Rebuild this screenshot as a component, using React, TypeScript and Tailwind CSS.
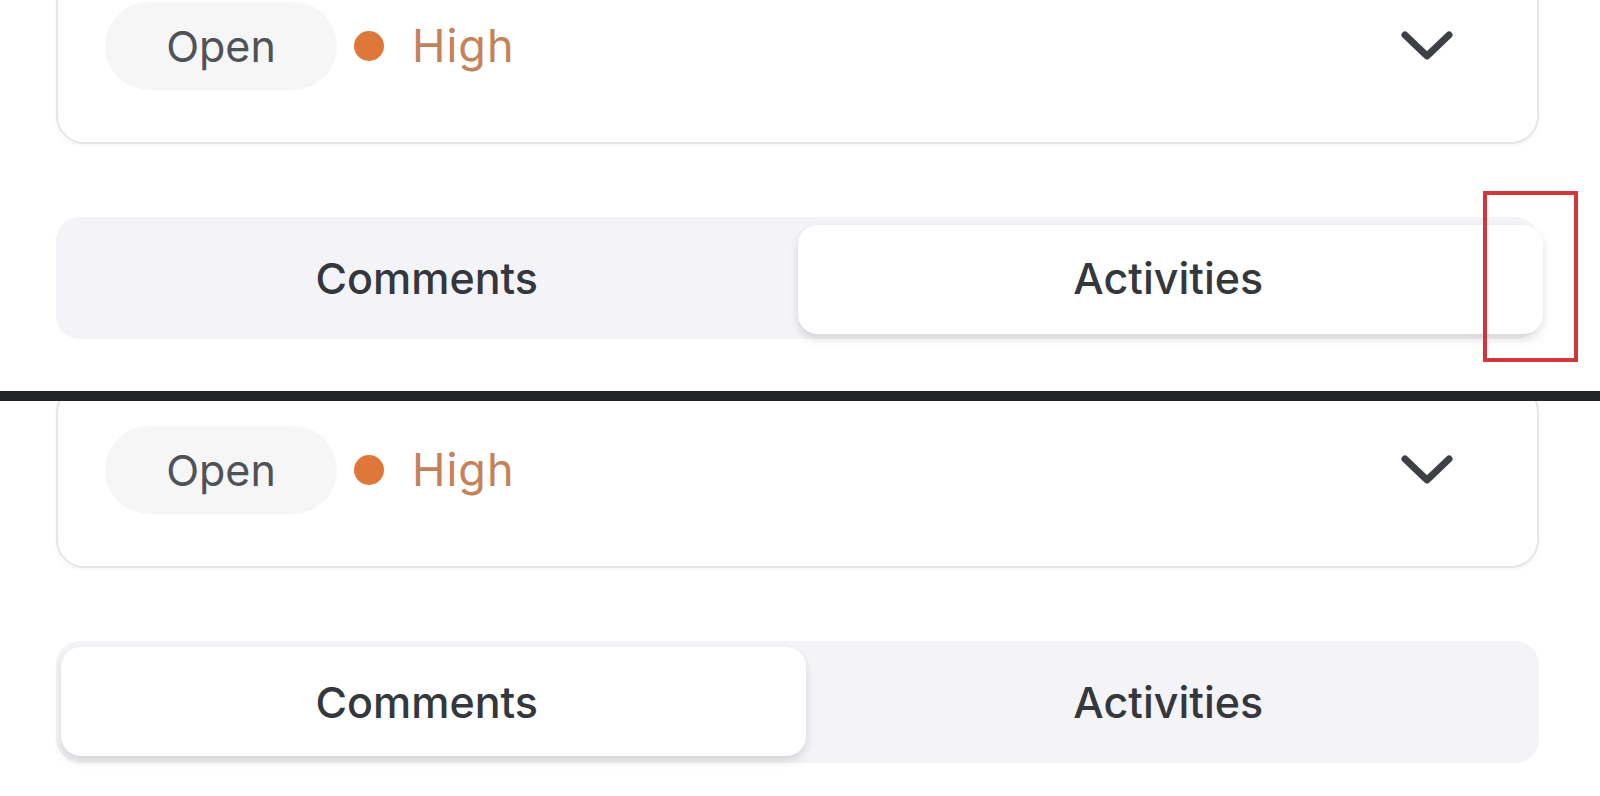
import React from "react";

const font = { fontFamily: "Inter, 'Noto Sans', sans-serif" };

function Chevron() {
  return (
    <svg width="52" height="30" viewBox="0 0 52 30" fill="none">
      <polyline
        points="4,4 26,25 48,4"
        stroke="#3d4146"
        strokeWidth="7"
        strokeLinecap="round"
        strokeLinejoin="round"
      />
    </svg>
  );
}

function TicketCard() {
  return (
    <div className="ml-[56px] w-[1483px] rounded-[28px] border-2 border-[#e6e6e6] bg-white pt-[40px] pb-[52px] pl-[47px] pr-[84px] shadow-[0_2px_4px_rgba(0,0,0,0.04)]">
      <div className="flex items-center">
        <span className="flex h-[88px] w-[232px] items-center justify-center rounded-full bg-[#f6f6f6] text-[43px] text-[#4f5358]">
          Open
        </span>
        <span className="ml-[17px] h-[30px] w-[30px] rounded-full bg-[#e0773a]" />
        <span className="ml-[28px] text-[45px] tracking-[1px] text-[#c4825a]">High</span>
        <span className="ml-auto">
          <Chevron />
        </span>
      </div>
    </div>
  );
}

// the white pill slides under the active label; top panel shows it spilling past the edge
function Tabs({ active, broken }: { active: "comments" | "activities"; broken?: boolean }) {
  const pill =
    active === "comments"
      ? "left-[5px] top-[6px]"
      : broken
        ? "left-[742px] top-[8px]"
        : "left-[733px] top-[6px]";
  return (
    <div className="relative ml-[56px] mt-[73px] h-[122px] w-[1483px] rounded-[24px] bg-[#f4f4f8]">
      <div
        className={`absolute ${pill} h-[109px] w-[745px] rounded-[20px] bg-white shadow-[0_5px_10px_rgba(0,0,0,0.13)]`}
      />
      <div className="relative grid h-full grid-cols-2 items-center text-center text-[43px] font-medium text-[#34373b]">
        <span>Comments</span>
        <span>Activities</span>
      </div>
    </div>
  );
}

export default function App() {
  return (
    <div className="h-[796px] w-[1600px] overflow-hidden bg-white" style={font}>
      <section className="relative h-[391px] overflow-hidden">
        <div className="-mt-[40px]">
          <TicketCard />
          <Tabs active="activities" broken />
        </div>
        <div className="absolute left-[1483px] top-[191px] h-[171px] w-[95px] border-4 border-[#d1363a]" />
      </section>

      <div className="h-[10px] bg-[#21242b]" />

      <section className="relative h-[395px] overflow-hidden">
        <div className="-mt-[17px]">
          <TicketCard />
          <Tabs active="comments" />
        </div>
      </section>
    </div>
  );
}
